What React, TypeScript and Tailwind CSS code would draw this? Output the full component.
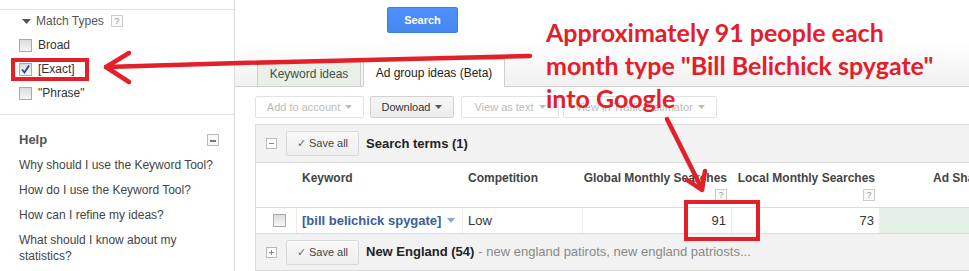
import React from "react";

const HELP_LINKS = [
  "Why should I use the Keyword Tool?",
  "How do I use the Keyword Tool?",
  "How can I refine my ideas?",
  "What should I know about my statistics?",
];

function Caret({ color = "#888" }: { color?: string }) {
  return (
    <svg width="7" height="4" viewBox="0 0 7 4" className="ml-[5px]">
      <path d="M0 0h7L3.5 4z" fill={color} />
    </svg>
  );
}

function Checkbox({ checked = false }: { checked?: boolean }) {
  return (
    <span className="relative inline-block w-[13px] h-[13px] border border-[#a9a9a9] bg-gradient-to-b from-[#dcdcdc] to-[#f7f7f7] shrink-0">
      {checked && (
        <svg width="11" height="11" viewBox="0 0 11 11" className="absolute left-[0px] top-[0px]">
          <path d="M2 5.5l2.5 3L9 1.5" stroke="#27448f" strokeWidth="1.8" fill="none" />
        </svg>
      )}
    </span>
  );
}

function HelpBox() {
  return (
    <span className="flex items-center justify-center w-[12px] h-[12px] border border-[#ccc] bg-[#fafafa] text-[9px] leading-none font-normal text-[#999]">
      ?
    </span>
  );
}

function ToggleBox({ open }: { open: boolean }) {
  return (
    <span className="relative inline-block w-[11px] h-[11px] border border-[#bbb] bg-white shrink-0">
      <span className="absolute left-[2px] top-[4px] w-[5px] h-px bg-[#888]" />
      {!open && <span className="absolute left-[4px] top-[2px] w-px h-[5px] bg-[#888]" />}
    </span>
  );
}

function SaveAll() {
  return (
    <span className="flex items-center justify-center w-[73px] h-[25px] border border-[#d9d9d9] rounded-[2px] bg-gradient-to-b from-[#f8f8f8] to-[#efefef] text-[11px] text-[#444] shrink-0">
      <span className="mr-[3px] text-[#666]">✓</span>Save all
    </span>
  );
}

function Sidebar() {
  return (
    <aside className="w-[235px] shrink-0 border-r border-[#dcdcdc] flex flex-col">
      <div className="h-[9px]" />
      <section className="h-[106px] border-t border-b border-[#e3e3e3] text-[12px]">
        <div className="h-[22px] flex items-center pl-[22px] text-[#555]">
          <svg width="9" height="5" viewBox="0 0 9 5">
            <path d="M0 0h9L4.5 5z" fill="#555" />
          </svg>
          <span className="ml-[5px]">Match Types</span>
          <span className="ml-[7px]">
            <HelpBox />
          </span>
        </div>
        <div className="mt-[1px]">
          {["Broad", "[Exact]", "\"Phrase\""].map((t, i) => (
            <label key={t} className="h-[24px] flex items-center pl-[19px] text-[#333]">
              <Checkbox checked={i === 1} />
              <span className="ml-[6px]">{t}</span>
            </label>
          ))}
        </div>
      </section>
      <section className="pt-[15px] pl-[19px] pr-[15px]">
        <div className="h-[20px] flex items-center justify-between">
          <span className="text-[13px] font-bold text-[#555]">Help</span>
          <span className="relative w-[12px] h-[12px] border border-[#bbb] bg-[#f8f8f8]">
            <span className="absolute left-[2px] top-[5px] w-[6px] h-[2px] bg-[#777]" />
          </span>
        </div>
        <ul className="mt-[7px] flex flex-col gap-[9px] text-[12px] leading-[16px] text-[#444] w-[202px]">
          {HELP_LINKS.map((l) => (
            <li key={l}>{l}</li>
          ))}
        </ul>
      </section>
    </aside>
  );
}

function ToolButton({ label, w, active = false }: { label: string; w: string; active?: boolean }) {
  return (
    <span
      className={
        active
          ? `flex items-center justify-center h-[22px] border border-[#d3d3d3] rounded-[2px] bg-gradient-to-b from-[#f6f6f6] to-[#ececec] text-[11px] text-[#333] ${w}`
          : `flex items-center justify-center h-[22px] border border-[#e2e2e2] rounded-[2px] bg-white text-[11px] text-[#bbb] ${w}`
      }
    >
      {label}
      <Caret color={active ? "#555" : "#bbb"} />
    </span>
  );
}

function Main() {
  return (
    <main className="flex-1 min-w-0 flex flex-col">
      <div className="h-[87px] border-b border-[#cfcfcf] bg-gradient-to-b from-white via-white to-[#f1f1f1] flex flex-col">
        <button className="ml-[152px] mt-[7px] w-[71px] h-[26px] rounded-[2px] border border-[#3a7fe8] bg-gradient-to-b from-[#4d90fe] to-[#4787ed] text-white text-[11px] font-bold">
          Search
        </button>
        <div className="mt-auto flex items-end pl-[22px] -mb-px">
          <span className="w-[104px] h-[27px] border border-[#cfcfcf] bg-[#e9f0e8] flex items-center justify-center text-[12px] text-[#3f4f44]">
            Keyword ideas
          </span>
          <span className="ml-[2px] w-[142px] h-[28px] border border-[#cfcfcf] border-b-white bg-white flex items-center justify-center text-[12px] text-[#222]">
            Ad group ideas (Beta)
          </span>
        </div>
      </div>

      <div className="h-[37px] pt-[9px] pl-[20px] flex items-start">
        <ToolButton label="Add to account" w="w-[109px]" />
        <span className="ml-[6px]">
          <ToolButton label="Download" w="w-[84px]" active />
        </span>
        <span className="ml-[7px]">
          <ToolButton label="View as text" w="w-[98px]" />
        </span>
        <span className="ml-[4px]">
          <ToolButton label="View in Traffic Estimator" w="w-[154px]" />
        </span>
      </div>

      <div className="ml-[20px] w-[760px] border-l border-t border-[#dcdcdc] text-[#333]">
        <div className="h-[38px] bg-[#f2f2f2] border-b border-[#dcdcdc] flex items-center pl-[10px]">
          <ToggleBox open />
          <span className="ml-[9px]">
            <SaveAll />
          </span>
          <span className="ml-[7px] text-[13px] font-bold text-[#222]">Search terms (1)</span>
        </div>

        <div className="h-[45px] border-b border-[#dcdcdc] flex text-[12px] leading-[15px] font-bold text-[#444] bg-white">
          <div className="w-[41px]" />
          <div className="w-[166px] pl-[5px] pt-[8px]">Keyword</div>
          <div className="w-[120px] pl-[5px] pt-[8px]">Competition</div>
          <div className="w-[149px] pr-[5px] pt-[8px] flex flex-col items-end">
            <span className="whitespace-nowrap">Global Monthly Searches</span>
            <span className="mt-[3px] flex">
              <HelpBox />
            </span>
          </div>
          <div className="w-[147px] pr-[4px] pt-[8px] flex flex-col items-end">
            <span className="whitespace-nowrap">Local Monthly Searches</span>
            <span className="mt-[3px] flex">
              <HelpBox />
            </span>
          </div>
          <div className="flex-1 pl-[54px] pt-[8px] whitespace-nowrap overflow-hidden">Ad Share</div>
        </div>

        <div className="h-[26px] border-b border-[#dcdcdc] flex text-[13px] bg-white">
          <div className="w-[41px] border-r border-[#ececec] flex items-center pl-[17px]">
            <Checkbox />
          </div>
          <div className="w-[166px] border-r border-[#ececec] flex items-center pl-[5px] font-bold text-[#3b5c9c]">
            [bill belichick spygate]
            <svg width="8" height="5" viewBox="0 0 8 5" className="ml-[6px]">
              <path d="M0 0h8L4 5z" fill="#8aa6d6" />
            </svg>
          </div>
          <div className="w-[120px] border-r border-[#ececec] flex items-center pl-[5px]">Low</div>
          <div className="w-[149px] border-r border-[#ececec] flex items-center justify-end pr-[5px]">91</div>
          <div className="w-[147px] flex items-center justify-end pr-[5px]">73</div>
          <div className="flex-1 bg-[#e5f0e7]" />
        </div>

        <div className="h-[37px] bg-[#f2f2f2] border-b border-[#dcdcdc] flex items-center pl-[10px] whitespace-nowrap">
          <ToggleBox open={false} />
          <span className="ml-[9px]">
            <SaveAll />
          </span>
          <span className="ml-[7px] text-[13px] font-bold text-[#222]">New England (54)</span>
          <span className="ml-[4px] text-[13px] text-[#888]">- new england patirots, new england patriosts...</span>
        </div>
      </div>
    </main>
  );
}

function Annotations() {
  return (
    <div className="absolute inset-0 pointer-events-none">
      <svg width="969" height="271" className="absolute left-0 top-0">
        <g stroke="#e3202a" fill="none" strokeLinecap="round" strokeLinejoin="round">
          <polyline points="106,67 240,63 530,56" strokeWidth="4.5" />
          <polyline points="129,53 106,67 129,82" strokeWidth="4.5" />
          <line x1="667" y1="119" x2="702" y2="189" strokeWidth="4.5" />
          <polyline points="687,180 702,190 705,171" strokeWidth="4.5" />
          <rect x="13" y="60" width="74" height="19" strokeWidth="4" strokeLinecap="butt" strokeLinejoin="miter" />
          <rect x="686" y="202" width="72" height="37" strokeWidth="4" strokeLinecap="butt" strokeLinejoin="miter" />
        </g>
      </svg>
      <div className="absolute left-[546px] top-[16px] font-['Lato',sans-serif] font-bold text-[25px] leading-[33px] text-[#e3202a] whitespace-nowrap">
        <div>Approximately 91 people each</div>
        <div>month type "Bill Belichick spygate"</div>
        <div>into Google</div>
      </div>
    </div>
  );
}

export default function App() {
  return (
    <div className="relative w-[969px] h-[271px] overflow-hidden bg-white font-['Liberation_Sans',Arial,sans-serif] text-[#333]">
      <div className="flex h-full">
        <Sidebar />
        <Main />
      </div>
      <Annotations />
    </div>
  );
}
